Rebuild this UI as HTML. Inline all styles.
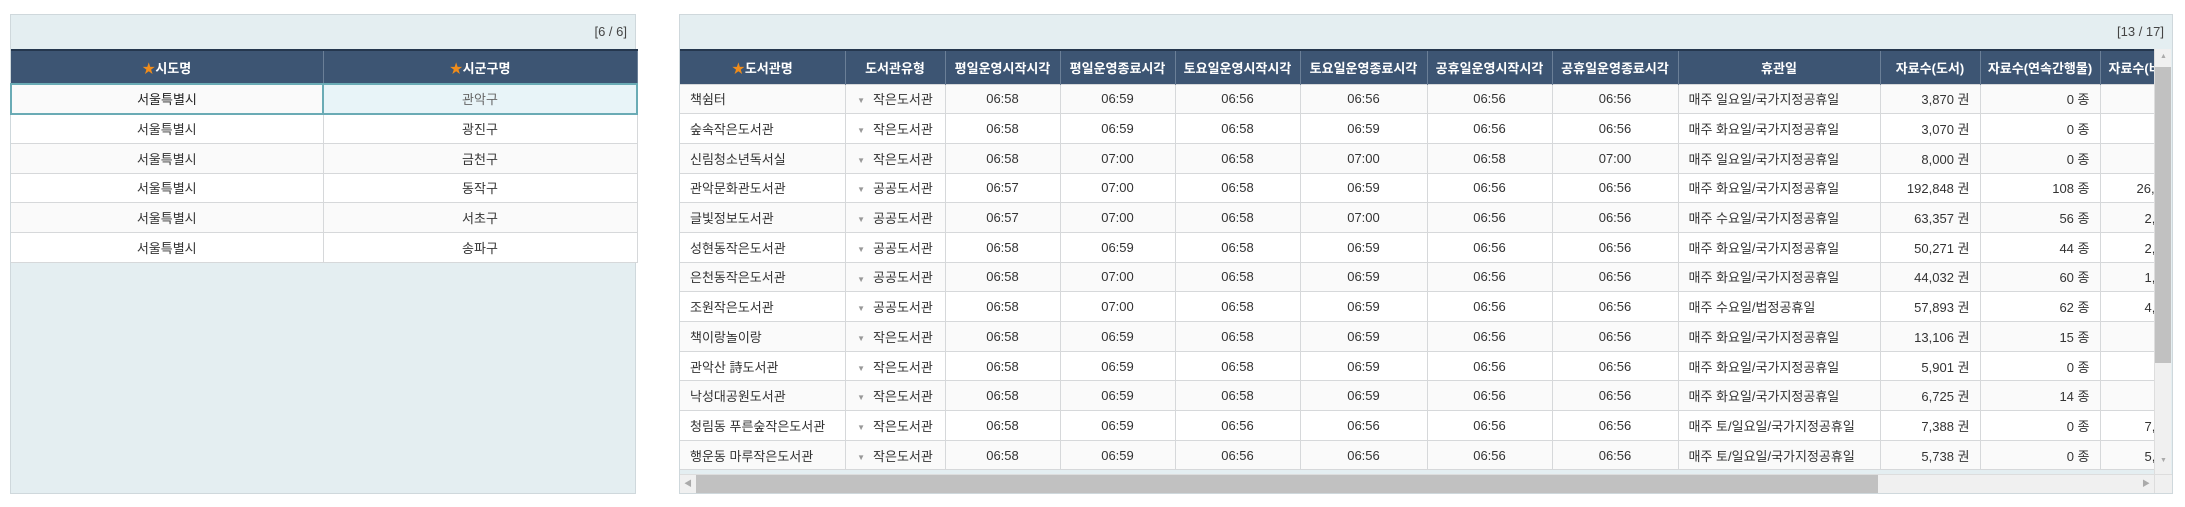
<!DOCTYPE html>
<html><head><meta charset="utf-8">
<style>
*{box-sizing:border-box;margin:0;padding:0}
body{width:2185px;height:507px;background:#fff;font-family:"Liberation Sans","Noto Sans CJK KR",sans-serif;font-size:13px;color:#333;position:relative;overflow:hidden}
.panel{position:absolute;background:#e4eef1;border:1px solid #cfd8dc}
.cnt{position:absolute;top:0;right:8px;height:34px;line-height:34px;font-size:13px;color:#444}
table{border-collapse:collapse;table-layout:fixed}
th{background:#3d5573;color:#fff;font-weight:bold;height:34px;border-right:1px solid #6b7f97;border-top:2px solid #25374e;font-size:13px;white-space:nowrap;overflow:hidden}
td{height:29.7px;border:1px solid #d6d8da;border-left:none;text-align:center;white-space:nowrap;overflow:hidden;background:#fff}
tr:nth-child(even) td{background:#fafafa}
.star{color:#f08c1a}
.l{text-align:left;padding-left:10px}
.r{text-align:right;padding-right:10px}
.tri{color:#999;font-size:8px;margin-right:8px;vertical-align:middle}
</style></head><body>

<div class="panel" style="left:10px;top:14px;width:626px;height:480px">
 <div class="cnt">[6 / 6]</div>
 <table style="position:absolute;left:-1px;top:34px;width:626px">
  <colgroup><col style="width:312px"><col style="width:314px"></colgroup>
  <tr><th><span class="star">★</span>시도명</th><th><span class="star">★</span>시군구명</th></tr>
  <tr><td style="border:2px solid #6aabb5;color:#222">서울특별시</td><td style="background:#e8f4f8;color:#666;border:2px solid #6aabb5;border-left:none">관악구</td></tr>
  <tr><td>서울특별시</td><td>광진구</td></tr>
  <tr><td>서울특별시</td><td>금천구</td></tr>
  <tr><td>서울특별시</td><td>동작구</td></tr>
  <tr><td>서울특별시</td><td>서초구</td></tr>
  <tr><td>서울특별시</td><td>송파구</td></tr>
 </table>
</div>

<div class="panel" style="left:679px;top:14px;width:1494px;height:480px">
 <div class="cnt">[13 / 17]</div>
 <div style="position:absolute;left:0;top:34px;width:1474px;height:425px;overflow:hidden">
 <table style="width:1520px">
  <colgroup><col style="width:165px"><col style="width:100px"><col style="width:115px"><col style="width:115px"><col style="width:125px"><col style="width:127px"><col style="width:125px"><col style="width:126px"><col style="width:202px"><col style="width:100px"><col style="width:120px"><col style="width:100px"></colgroup>
  <tr><th><span class="star">★</span>도서관명</th><th>도서관유형</th><th>평일운영시작시각</th><th>평일운영종료시각</th><th>토요일운영시작시각</th><th>토요일운영종료시각</th><th>공휴일운영시작시각</th><th>공휴일운영종료시각</th><th>휴관일</th><th>자료수(도서)</th><th>자료수(연속간행물)</th><th style="text-align:left;padding-left:8px">자료수(비도서)</th></tr>
  <tr><td class="l">책쉼터</td><td><span class="tri">▼</span>작은도서관</td><td>06:58</td><td>06:59</td><td>06:56</td><td>06:56</td><td>06:56</td><td>06:56</td><td class="l">매주 일요일/국가지정공휴일</td><td class="r">3,870 권</td><td class="r">0 종</td><td class="r"></td></tr>
  <tr><td class="l">숲속작은도서관</td><td><span class="tri">▼</span>작은도서관</td><td>06:58</td><td>06:59</td><td>06:58</td><td>06:59</td><td>06:56</td><td>06:56</td><td class="l">매주 화요일/국가지정공휴일</td><td class="r">3,070 권</td><td class="r">0 종</td><td class="r"></td></tr>
  <tr><td class="l">신림청소년독서실</td><td><span class="tri">▼</span>작은도서관</td><td>06:58</td><td>07:00</td><td>06:58</td><td>07:00</td><td>06:58</td><td>07:00</td><td class="l">매주 일요일/국가지정공휴일</td><td class="r">8,000 권</td><td class="r">0 종</td><td class="r"></td></tr>
  <tr><td class="l">관악문화관도서관</td><td><span class="tri">▼</span>공공도서관</td><td>06:57</td><td>07:00</td><td>06:58</td><td>06:59</td><td>06:56</td><td>06:56</td><td class="l">매주 화요일/국가지정공휴일</td><td class="r">192,848 권</td><td class="r">108 종</td><td class="l" style="padding-left:36px">26,512 종</td></tr>
  <tr><td class="l">글빛정보도서관</td><td><span class="tri">▼</span>공공도서관</td><td>06:57</td><td>07:00</td><td>06:58</td><td>07:00</td><td>06:56</td><td>06:56</td><td class="l">매주 수요일/국가지정공휴일</td><td class="r">63,357 권</td><td class="r">56 종</td><td class="l" style="padding-left:44px">2,155 종</td></tr>
  <tr><td class="l">성현동작은도서관</td><td><span class="tri">▼</span>공공도서관</td><td>06:58</td><td>06:59</td><td>06:58</td><td>06:59</td><td>06:56</td><td>06:56</td><td class="l">매주 화요일/국가지정공휴일</td><td class="r">50,271 권</td><td class="r">44 종</td><td class="l" style="padding-left:44px">2,034 종</td></tr>
  <tr><td class="l">은천동작은도서관</td><td><span class="tri">▼</span>공공도서관</td><td>06:58</td><td>07:00</td><td>06:58</td><td>06:59</td><td>06:56</td><td>06:56</td><td class="l">매주 화요일/국가지정공휴일</td><td class="r">44,032 권</td><td class="r">60 종</td><td class="l" style="padding-left:44px">1,921 종</td></tr>
  <tr><td class="l">조원작은도서관</td><td><span class="tri">▼</span>공공도서관</td><td>06:58</td><td>07:00</td><td>06:58</td><td>06:59</td><td>06:56</td><td>06:56</td><td class="l">매주 수요일/법정공휴일</td><td class="r">57,893 권</td><td class="r">62 종</td><td class="l" style="padding-left:44px">4,112 종</td></tr>
  <tr><td class="l">책이랑놀이랑</td><td><span class="tri">▼</span>작은도서관</td><td>06:58</td><td>06:59</td><td>06:58</td><td>06:59</td><td>06:56</td><td>06:56</td><td class="l">매주 화요일/국가지정공휴일</td><td class="r">13,106 권</td><td class="r">15 종</td><td class="l" style="padding-left:54px">.</td></tr>
  <tr><td class="l">관악산 詩도서관</td><td><span class="tri">▼</span>작은도서관</td><td>06:58</td><td>06:59</td><td>06:58</td><td>06:59</td><td>06:56</td><td>06:56</td><td class="l">매주 화요일/국가지정공휴일</td><td class="r">5,901 권</td><td class="r">0 종</td><td class="r"></td></tr>
  <tr><td class="l">낙성대공원도서관</td><td><span class="tri">▼</span>작은도서관</td><td>06:58</td><td>06:59</td><td>06:58</td><td>06:59</td><td>06:56</td><td>06:56</td><td class="l">매주 화요일/국가지정공휴일</td><td class="r">6,725 권</td><td class="r">14 종</td><td class="l" style="padding-left:54px">.</td></tr>
  <tr><td class="l">청림동 푸른숲작은도서관</td><td><span class="tri">▼</span>작은도서관</td><td>06:58</td><td>06:59</td><td>06:56</td><td>06:56</td><td>06:56</td><td>06:56</td><td class="l">매주 토/일요일/국가지정공휴일</td><td class="r">7,388 권</td><td class="r">0 종</td><td class="l" style="padding-left:44px">7,388 종</td></tr>
  <tr><td class="l">행운동 마루작은도서관</td><td><span class="tri">▼</span>작은도서관</td><td>06:58</td><td>06:59</td><td>06:56</td><td>06:56</td><td>06:56</td><td>06:56</td><td class="l">매주 토/일요일/국가지정공휴일</td><td class="r">5,738 권</td><td class="r">0 종</td><td class="l" style="padding-left:44px">5,738 종</td></tr>
 </table>
 </div>
 <div style="position:absolute;left:1474px;top:34px;width:17px;height:425px;background:#f0f0f0;border-left:1px solid #ddd">
  <div style="position:absolute;top:4px;left:0;width:17px;text-align:center;font-size:7px;color:#aaa">▲</div>
  <div style="position:absolute;top:18px;left:0;width:16px;height:296px;background:#c1c1c1"></div>
  <div style="position:absolute;top:408px;left:0;width:17px;text-align:center;font-size:7px;color:#aaa">▼</div>
 </div>
 <div style="position:absolute;left:0;top:459px;width:1474px;height:19px;background:#f0f0f0;border-top:1px solid #ddd">
  <div style="position:absolute;left:4px;top:3px;font-size:8px;color:#aaa">◀</div>
  <div style="position:absolute;left:16px;top:0;width:1182px;height:18px;background:#c1c1c1"></div>
  <div style="position:absolute;right:4px;top:3px;font-size:8px;color:#aaa">▶</div>
 </div>
 <div style="position:absolute;left:1474px;top:459px;width:18px;height:19px;background:#f0f0f0;border-top:1px solid #ddd;border-left:1px solid #ddd"></div>
</div>
</body></html>
